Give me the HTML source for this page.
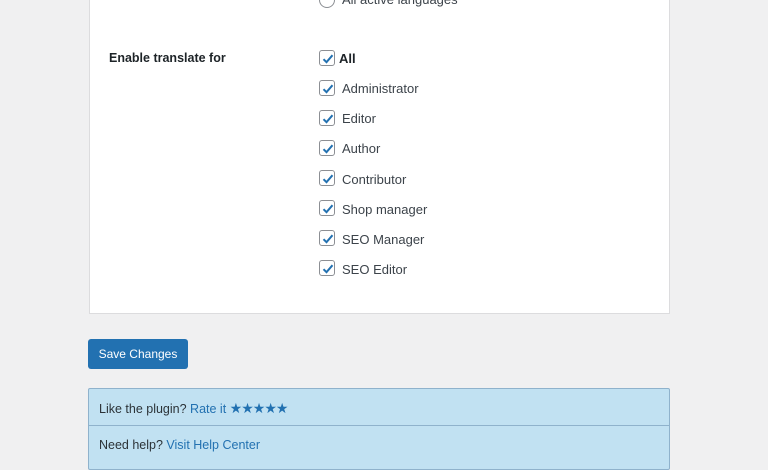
<!DOCTYPE html>
<html><head><style>
body{margin:0;width:768px;height:452px;overflow:hidden;background:#f0f0f1;font-family:"Liberation Sans",sans-serif;font-size:13px;color:#1d2327;position:relative}
.panel{position:absolute;left:89px;top:-5px;width:579px;height:317px;background:#fff;border:1px solid #dcdcde}
.lbl{position:absolute;left:109px;top:51px;font-weight:bold;font-size:12.5px}
.radio{position:absolute;left:319px;top:-8px;width:14px;height:14px;border:1px solid #8c8f94;border-radius:50%;background:#fff}
.rt{position:absolute;left:342px;top:-8px;color:#3c434a}
.cb{position:absolute;left:319px;width:14px;height:14px;border:1px solid #8c8f94;border-radius:3px;background:#fff}
.cb svg{position:absolute;left:0;top:0}
.ct{position:absolute;left:342px;color:#3c434a}
.btn{position:absolute;left:88px;top:339px;width:100px;height:30px;background:#2271b1;border-radius:3px;color:#fff;font-size:12px;line-height:30px;text-align:center}
.note{position:absolute;left:88px;top:388px;width:580px;height:80px;background:#c1e1f2;border:1px solid #8fb2cc;border-radius:2px}
.note .row{height:36px;line-height:38px;padding-left:10px;font-size:12.5px;color:#2c3338}
.note .row+.row{border-top:1px solid #8fb2cc}
a{color:#2271b1;text-decoration:none}
.stars{color:#2271b1;font-size:14px;letter-spacing:-1px}
</style></head><body>
<div class="panel"></div>
<div class="radio"></div><div class="rt">All active languages</div>
<div class="lbl">Enable translate for</div>

<div class="cb" style="top:50px"><svg width="16" height="16" viewBox="0 0 16 16"><path d="M3.5 8.2l3 3 6-7" fill="none" stroke="#2271b1" stroke-width="2"/></svg></div><div class="ct" style="top:51px;font-weight:bold;color:#1d2327;left:339px">All</div>
<div class="cb" style="top:80px"><svg width="16" height="16" viewBox="0 0 16 16"><path d="M3.5 8.2l3 3 6-7" fill="none" stroke="#2271b1" stroke-width="2"/></svg></div><div class="ct" style="top:81px">Administrator</div>
<div class="cb" style="top:110px"><svg width="16" height="16" viewBox="0 0 16 16"><path d="M3.5 8.2l3 3 6-7" fill="none" stroke="#2271b1" stroke-width="2"/></svg></div><div class="ct" style="top:111px">Editor</div>
<div class="cb" style="top:140px"><svg width="16" height="16" viewBox="0 0 16 16"><path d="M3.5 8.2l3 3 6-7" fill="none" stroke="#2271b1" stroke-width="2"/></svg></div><div class="ct" style="top:141px">Author</div>
<div class="cb" style="top:170px"><svg width="16" height="16" viewBox="0 0 16 16"><path d="M3.5 8.2l3 3 6-7" fill="none" stroke="#2271b1" stroke-width="2"/></svg></div><div class="ct" style="top:172px">Contributor</div>
<div class="cb" style="top:200px"><svg width="16" height="16" viewBox="0 0 16 16"><path d="M3.5 8.2l3 3 6-7" fill="none" stroke="#2271b1" stroke-width="2"/></svg></div><div class="ct" style="top:202px">Shop manager</div>
<div class="cb" style="top:230px"><svg width="16" height="16" viewBox="0 0 16 16"><path d="M3.5 8.2l3 3 6-7" fill="none" stroke="#2271b1" stroke-width="2"/></svg></div><div class="ct" style="top:232px">SEO Manager</div>
<div class="cb" style="top:260px"><svg width="16" height="16" viewBox="0 0 16 16"><path d="M3.5 8.2l3 3 6-7" fill="none" stroke="#2271b1" stroke-width="2"/></svg></div><div class="ct" style="top:262px">SEO Editor</div>

<div class="btn">Save Changes</div>
<div class="note">
<div class="row">Like the plugin? <a>Rate it</a> <span class="stars">★★★★★</span></div>
<div class="row">Need help? <a>Visit Help Center</a></div>
</div>
</body></html>
